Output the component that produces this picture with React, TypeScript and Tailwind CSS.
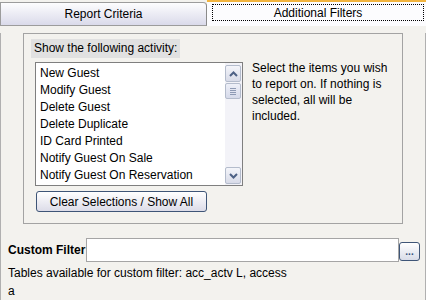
import React from 'react'

const activities = [
  'New Guest',
  'Modify Guest',
  'Delete Guest',
  'Delete Duplicate',
  'ID Card Printed',
  'Notify Guest On Sale',
  'Notify Guest On Reservation',
]

function Arrow({ up }: { up?: boolean }) {
  return (
    <svg width="9" height="6" viewBox="0 0 9 6" className="block">
      <path
        d={up ? 'M1 5 L4.5 1.5 L8 5' : 'M1 1 L4.5 4.5 L8 1'}
        fill="none"
        stroke="#4d6185"
        strokeWidth="2"
      />
    </svg>
  )
}

function ScrollButton({ up }: { up?: boolean }) {
  return (
    <div className="h-[17px] w-[16px] rounded-[2px] border border-[#b4bccc] bg-gradient-to-b from-[#f4f5fa] to-[#d8dbe8] flex items-center justify-center">
      <Arrow up={up} />
    </div>
  )
}

export default function App() {
  return (
    <div className="w-[426px] h-[300px] overflow-hidden bg-[#f3f2ee] font-['Liberation_Sans',Arial,sans-serif] text-[12px] text-black">
      {/* tabs */}
      <div className="flex h-[26px]">
        <div className="w-[207px] mt-[2px] h-[24px] border border-[#9c9c9c] border-r-[#8a8a8a] rounded-tr-[4px] bg-gradient-to-b from-[#fdfdfe] to-[#dadaea] flex items-center justify-center">
          Report Criteria
        </div>
        <div className="flex-1 h-[26px] bg-[#fcfcfe] border-t-2 border-[#f2b43e] pt-[2px] pl-[5px] pr-[2px]">
          <div className="h-[17px] border border-dotted border-black flex items-center justify-center">
            Additional Filters
          </div>
        </div>
      </div>

      {/* panel */}
      <div className="h-[274px] border-l border-r border-[#b0b0b0]">
        <div className="ml-[22px] mt-[7px] w-[380px] h-[191px] border border-[#a3a3a3]">
          <div className="mt-[5px] ml-[7px] inline-block h-[19px] leading-[19px] px-[3px] bg-[#e1e1e1]">
            Show the following activity:
          </div>

          <div className="flex mt-[4px] ml-[11px]">
            <div className="w-[208px] h-[124px] border border-[#7f7f7f] bg-white flex">
              <div className="flex-1 pt-[2px]">
                {activities.map(a => (
                  <div key={a} className="h-[17px] leading-[17px] pl-[4px] whitespace-nowrap">
                    {a}
                  </div>
                ))}
              </div>
              <div className="w-[17px] bg-[#f3f3f8] flex flex-col pt-[2px] pb-[1px]">
                <ScrollButton up />
                <div className="mt-[1px] h-[16px] w-[16px] rounded-[2px] border border-[#b4bccc] bg-gradient-to-b from-[#eef0f8] to-[#d6daea] flex flex-col items-center justify-center gap-[1px]">
                  <div className="w-[6px] h-px bg-[#8e9ab4]" />
                  <div className="w-[6px] h-px bg-[#8e9ab4]" />
                  <div className="w-[6px] h-px bg-[#8e9ab4]" />
                  <div className="w-[6px] h-px bg-[#8e9ab4]" />
                </div>
                <div className="flex-1" />
                <ScrollButton />
              </div>
            </div>
            <div className="ml-[9px] mt-[-2px] w-[142px] leading-[16px]">
              Select the items you wish to report on. If nothing is selected, all will be included.
            </div>
          </div>

          <div className="mt-[5px] ml-[12px] w-[171px] h-[21px] rounded-[3px] border border-[#3e5577] bg-gradient-to-b from-white to-[#dcdce8] flex items-center justify-center">
            Clear Selections / Show All
          </div>
        </div>

        <div className="flex mt-[14px] pl-[7px]">
          <div className="w-[78px] font-bold leading-[24px]">Custom Filter</div>
          <div className="w-[313px] h-[24px] border border-[#a5a5a5] bg-white" />
          <div className="mt-[4px] w-[21px] h-[19px] rounded-[3px] border border-[#3e5577] bg-gradient-to-b from-white to-[#d8dce8] flex items-center justify-center text-[#33507a] text-[10px] font-bold leading-none">
            ...
          </div>
        </div>

        <div className="mt-[2px] pl-[7px] leading-[18px]">
          Tables available for custom filter: acc_actv L, access
          <br />a
        </div>
      </div>
    </div>
  )
}
